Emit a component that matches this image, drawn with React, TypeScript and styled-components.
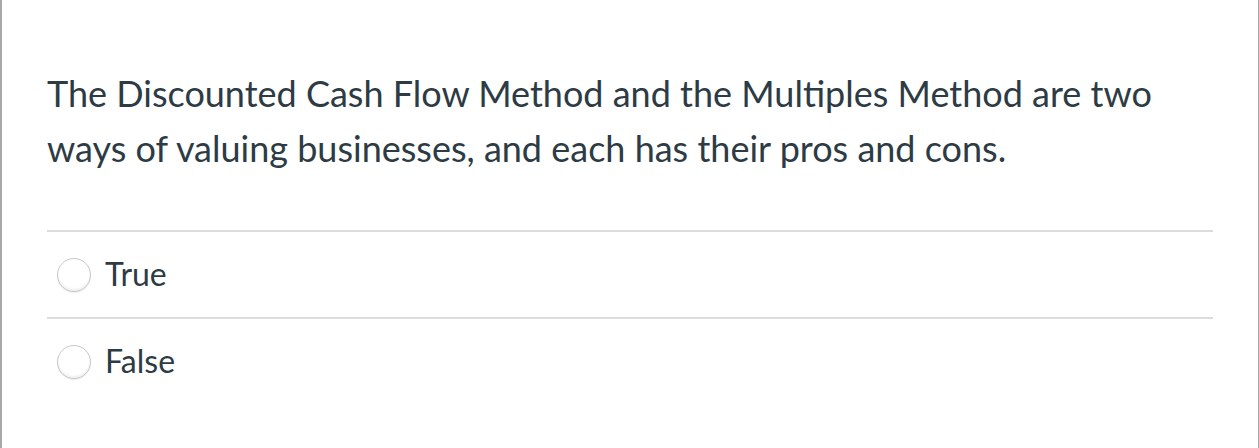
import React from 'react';
import styled, { createGlobalStyle } from 'styled-components';

const GlobalStyle = createGlobalStyle`
  html, body {
    margin: 0;
    padding: 0;
    background: #fff;
  }
  body {
    font-family: Lato, "Open Sans", sans-serif;
    color: #2d3b45;
  }
`;

const Page = styled.div`
  box-sizing: border-box;
  height: 448px;
  border-left: 2px solid #a8a8a8;
  border-right: 1px solid #a8a8a8;
  padding: 0 45px 0 45px;
`;

const Question = styled.div`
  padding-top: 66px;
  font-size: 36px;
  line-height: 55px;
  margin-bottom: 54px;
`;

const Answers = styled.div`
  display: flex;
  flex-direction: column;
`;

const AnswerRow = styled.label`
  display: flex;
  align-items: center;
  gap: 14px;
  height: 85px;
  padding-left: 10px;
  border-top: 2px solid #dcdcdc;
  cursor: pointer;
`;

const Radio = styled.span`
  box-sizing: border-box;
  width: 34px;
  height: 34px;
  border-radius: 50%;
  border: 1px solid #c9c9c9;
  background: #fff;
  box-shadow: inset 0 -2px 2px rgba(0, 0, 0, 0.06), 0 1px 1px rgba(0, 0, 0, 0.08);
`;

const AnswerText = styled.span`
  font-size: 32px;
  line-height: 1;
  padding-bottom: 2px;
`;

const answers = ['True', 'False'];

export default function App() {
  return (
    <>
      <GlobalStyle />
      <Page>
        <Question>
          The Discounted Cash Flow Method and the Multiples Method are two ways of valuing businesses, and each has their pros and cons.
        </Question>
        <Answers>
          {answers.map((a) => (
            <AnswerRow key={a}>
              <Radio />
              <AnswerText>{a}</AnswerText>
            </AnswerRow>
          ))}
        </Answers>
      </Page>
    </>
  );
}
